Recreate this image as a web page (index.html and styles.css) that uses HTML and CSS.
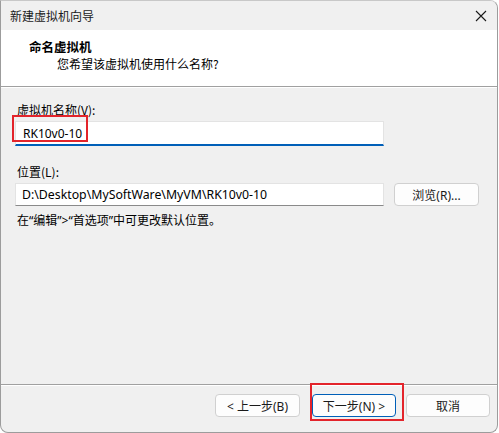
FILE: index.html
```html
<!DOCTYPE html>
<html lang="zh-CN">
<head>
<meta charset="utf-8">
<title>新建虚拟机向导</title>
<link rel="stylesheet" href="styles.css">
</head>
<body>
<div class="window">
  <div class="titlebar">
    <span class="title">新建虚拟机向导</span>
    <svg class="close" width="12" height="12" viewBox="0 0 12 12"><path d="M1 1 L11 11 M11 1 L1 11" stroke="#1a1a1a" stroke-width="1.1" fill="none"/></svg>
  </div>
  <div class="header">
    <div class="h-title">命名虚拟机</div>
    <div class="h-sub">您希望该虚拟机使用什么名称?</div>
  </div>
  <div class="content">
    <div class="label label-first">虚拟机名称(V):</div>
    <div class="input input-active">RK10v0-10</div>
    <div class="label label-loc">位置(L):</div>
    <div class="row">
      <div class="input input-loc">D:\Desktop\MySoftWare\MyVM\RK10v0-10</div>
      <div class="btn btn-browse">浏览(R)...</div>
    </div>
    <div class="hint">在“编辑”&gt;“首选项”中可更改默认位置。</div>
    <div class="mark mark-name"></div>
  </div>
  <div class="footer">
    <div class="btn btn-back">&lt; 上一步(B)</div>
    <div class="btn btn-next">下一步(N) &gt;</div>
    <div class="btn btn-cancel">取消</div>
    <div class="mark mark-next"></div>
  </div>
</div>
</body>
</html>
```
FILE: styles.css
```css
html, body {
  margin: 0;
  padding: 0;
  background: #ffffff;
}
body {
  font-family: "Noto Sans", "Noto Sans CJK SC", sans-serif;
  font-size: 12px;
  color: #000;
}
.window {
  box-sizing: border-box;
  width: 498px;
  height: 433px;
  border: 1px solid #9c9c9c;
  border-top-color: #c8c8c8;
  border-radius: 0 8px 8px 8px;
  background: #f0f0f0;
  display: flex;
  flex-direction: column;
  overflow: hidden;
  position: relative;
}
.titlebar {
  height: 29px;
  display: flex;
  align-items: center;
  justify-content: space-between;
  padding: 0 10px 0 9px;
  background: #f0f0f0;
  flex: none;
}
.title {
  font-family: "Noto Sans CJK SC", sans-serif;
  font-size: 12px;
  color: #1a1a1a;
}
.header {
  background: #ffffff;
  height: 57px;
  border-bottom: 1px solid #a0a0a0;
  box-shadow: 0 1px 0 #ffffff;
  flex: none;
  box-sizing: border-box;
  padding-top: 8px;
}
.h-title {
  font-family: "Noto Sans CJK SC", sans-serif;
  font-weight: bold;
  font-size: 12.5px;
  line-height: 17px;
  padding-left: 28px;
}
.h-sub {
  font-family: "Noto Sans CJK SC", sans-serif;
  line-height: 17px;
  padding-left: 56px;
}
.content {
  flex: 1;
  position: relative;
  padding: 14px 0 0 14px;
  margin-top: 1px;
}
.label {
  font-family: "Noto Sans CJK SC", sans-serif;
  line-height: 16px;
  padding-left: 2px;
}
.input {
  box-sizing: border-box;
  width: 369px;
  background: #fff;
  border: 1px solid #e3e3e3;
  display: flex;
  align-items: center;
  font-family: "Noto Sans", "Noto Sans CJK SC", sans-serif;
}
.input-active {
  margin-top: 3px;
  height: 25px;
  border-bottom: 2px solid #005fb8;
  padding-left: 7px;
  font-size: 12px;
}
.label-loc {
  margin-top: 18px;
}
.row {
  display: flex;
  align-items: center;
  margin-top: 3px;
}
.input-loc {
  height: 23px;
  border-bottom: 1px solid #8a8a8a;
  padding-left: 6px;
  font-size: 12.3px;
}
.btn {
  box-sizing: border-box;
  height: 23px;
  border: 1px solid #d0d0d0;
  border-radius: 4px;
  background: #fdfdfd;
  display: flex;
  align-items: center;
  justify-content: center;
  font-family: "Noto Sans", "Noto Sans CJK SC", sans-serif;
  font-size: 12px;
  color: #1a1a1a;
}
.btn-browse {
  width: 85px;
  margin-left: 10px;
}
.hint {
  font-family: "Noto Sans", "Noto Sans CJK SC", sans-serif;
  line-height: 16px;
  margin-top: 7px;
  padding-left: 2px;
}
.footer {
  flex: none;
  height: 38px;
  border-top: 1px solid #a0a0a0;
  box-shadow: inset 0 1px 0 #ffffff;
  display: flex;
  justify-content: flex-end;
  align-items: flex-start;
  padding: 9px 7px 0 0;
  box-sizing: content-box;
  position: relative;
}
.btn-back {
  width: 85px;
}
.btn-next {
  width: 84px;
  margin-left: 12px;
  border-color: #005fb8;
}
.btn-cancel {
  width: 84px;
  margin-left: 10px;
}
.mark {
  position: absolute;
  border: 2px solid #e3242b;
  box-sizing: border-box;
}
.mark-name {
  left: 11px;
  top: 27px;
  width: 76px;
  height: 27px;
}
.mark-next {
  left: 309px;
  top: -2px;
  width: 94px;
  height: 38px;
}
```
